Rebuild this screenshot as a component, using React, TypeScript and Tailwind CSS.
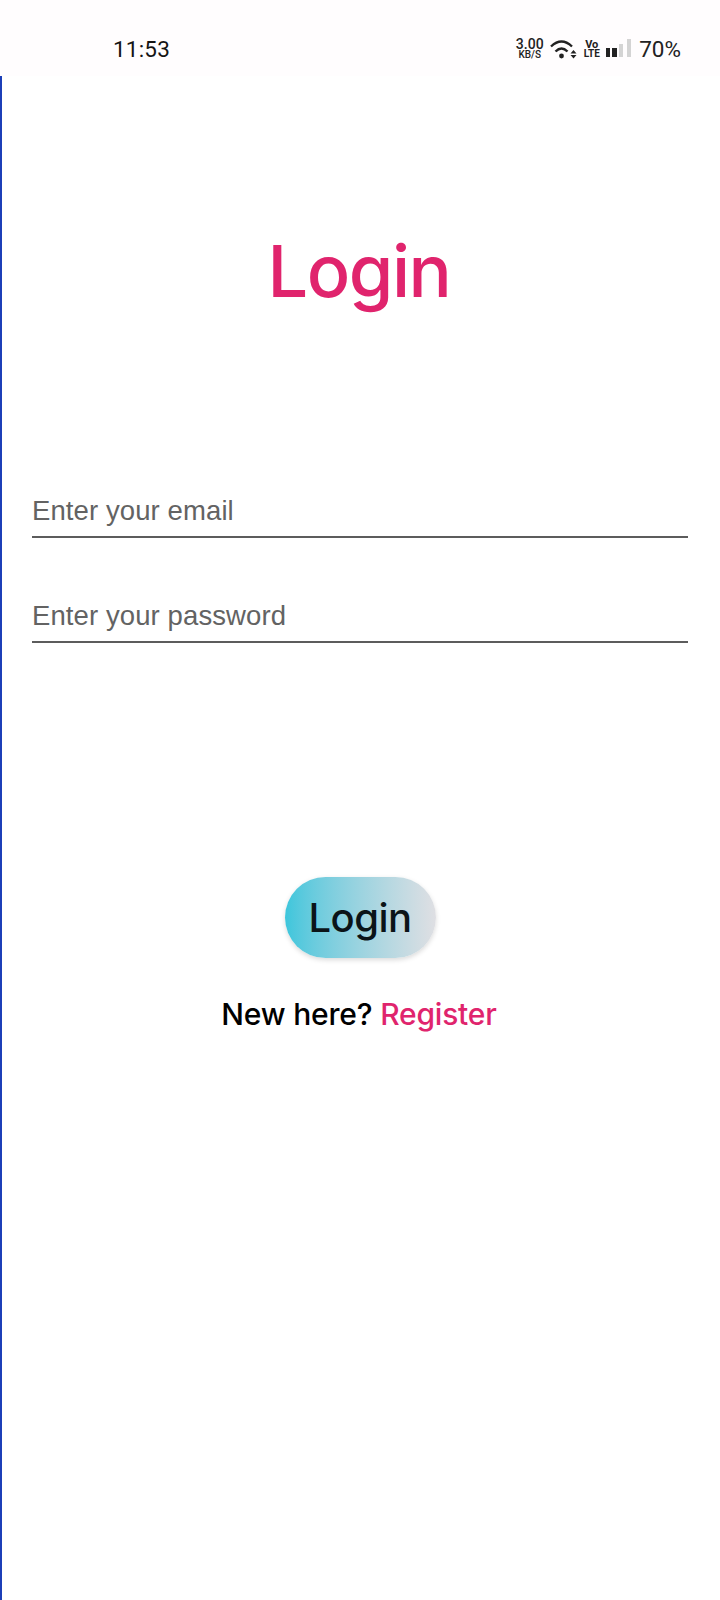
export default function App() {
  return (
    <div className="w-[720px] h-[1600px] bg-white overflow-hidden flex flex-col" style={{ fontFamily: "Inter, sans-serif" }}>
      <div className="h-[76px] shrink-0 bg-[#fffdfe] flex items-center pt-[22px] pl-[113px] pr-[39px] justify-between">
        <span className="text-[22.500px] leading-none text-[#151515] tracking-[0.2px]" style={{ fontFamily: "Roboto, sans-serif" }}>11:53</span>
        <div className="flex items-center text-[#222]" style={{ fontFamily: "Roboto, sans-serif" }}>
          <div className="flex flex-col items-center font-medium mr-[7px] w-[27px]">
            <span className="text-[14px] leading-[11px]">3.00</span>
            <span className="text-[10px] leading-[9px]">KB/S</span>
          </div>
          <svg width="27" height="20" viewBox="0 0 27 20" className="mr-[8px]">
            <path d="M1 7.500 Q11.500 -2.500 22 7.500" fill="none" stroke="#222" strokeWidth="2.400" />
            <path d="M5.500 12.500 Q11.500 6.500 17.500 12.500" fill="none" stroke="#222" strokeWidth="2.400" />
            <circle cx="11.500" cy="17" r="2.400" fill="#222" />
            <path d="M20.500 14.500 L23.500 11 L26.500 14.500 Z M20.500 16 L26.500 16 L23.500 19.500 Z" fill="#222" />
          </svg>
          <div className="flex flex-col items-center font-bold mr-[8px] w-[13px]">
            <span className="text-[11px] leading-[9px]">Vo</span>
            <span className="text-[10px] leading-[9px]">LTE</span>
          </div>
          <svg width="25" height="20" viewBox="0 0 25 20" className="mr-[8px]">
            <rect x="0" y="9" width="4" height="9" fill="#222" />
            <rect x="6" y="9" width="5" height="9" fill="#222" />
            <rect x="13" y="5" width="4" height="13" fill="#d4d4d4" />
            <rect x="21" y="0" width="4" height="18" fill="#d4d4d4" />
          </svg>
          <span className="text-[22.500px] leading-none">70%</span>
        </div>
      </div>
      <div className="flex-1 border-l-2 border-[#1c3fb8] pl-[30px] pr-[32px] flex flex-col">
        <h1 className="mt-[151px] text-center text-[72px] leading-[88px] text-[#e0246d] font-medium tracking-[-1.500px] pr-[2px]">Login</h1>
        <div className="mt-[171px] border-b-2 border-[#5c5c5c] h-[52px] flex items-center">
          <input readOnly placeholder="Enter your email" className="w-full bg-transparent outline-none text-[27.500px] tracking-[0.1px] placeholder:text-[#636363]" style={{ fontFamily: "'Liberation Sans', sans-serif" }} />
        </div>
        <div className="mt-[53px] border-b-2 border-[#5c5c5c] h-[52px] flex items-center">
          <input readOnly placeholder="Enter your password" className="w-full bg-transparent outline-none text-[27.500px] tracking-[0.1px] placeholder:text-[#636363]" style={{ fontFamily: "'Liberation Sans', sans-serif" }} />
        </div>
        <div className="mt-[234px] flex justify-center">
          <button className="w-[151px] h-[81px] rounded-full bg-gradient-to-r from-[#3cc6dc] to-[#dfdfe3] text-[40px] font-medium tracking-[-0.500px] text-[#0b1418] shadow-[0_2px_5px_rgba(0,0,0,0.15)]">Login</button>
        </div>
        <p className="mt-[36px] text-center text-[30px] leading-[40px] font-[450] tracking-[-0.2px] text-black pr-[2px]">
          New here? <span className="text-[#e0246d]">Register</span>
        </p>
      </div>
    </div>
  );
}
